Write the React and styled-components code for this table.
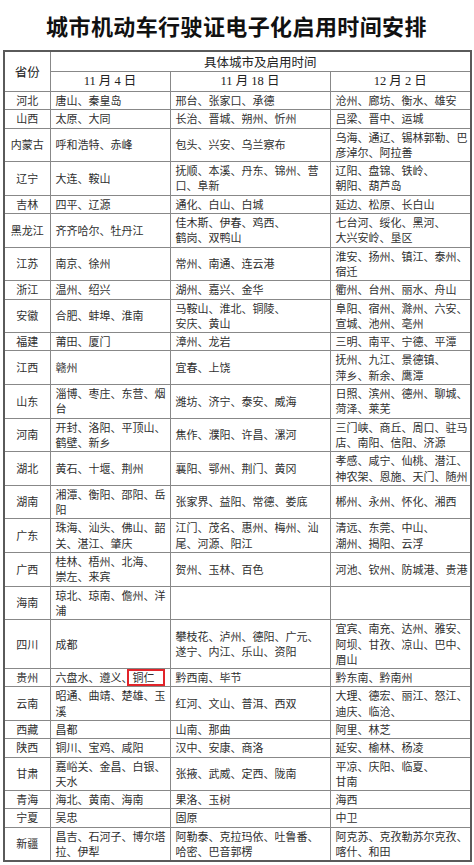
import styled, { createGlobalStyle } from "styled-components";

const GlobalStyle = createGlobalStyle`
  body {
    margin: 0;
    background: #fff;
    font-family: "Noto Sans CJK SC", "Noto Sans", sans-serif;
  }
`;

const Page = styled.div`
  width: 474px;
  box-sizing: border-box;
  padding: 0 4px 0 3px;
`;

const Title = styled.h1`
  margin: 0;
  height: 50px;
  line-height: 50px;
  text-align: center;
  font-size: 22px;
  font-weight: 700;
  letter-spacing: 0.4px;
  color: #111;
`;

const Table = styled.table`
  width: 467px;
  table-layout: fixed;
  border-collapse: collapse;
  border: 2px solid #5a5a5a;
  font-size: 11px;
  color: #2f2f2f;
`;

const HeadCell = styled.th`
  border: 1px solid #888;
  padding: 1px 0;
  font-weight: 400;
  font-size: 12.5px;
  line-height: 17px;
  text-align: center;
  color: #222;
  font-family: ${(p) =>
    p.$date
      ? `"Liberation Serif", "Noto Sans CJK SC", serif`
      : `"Noto Sans CJK SC", sans-serif`};
`;

const Cell = styled.td`
  border: 1px solid #888;
  padding: ${(p) => (p.$province ? "1px 0" : "1px 5px")};
  line-height: 15.3px;
  white-space: pre;
  vertical-align: middle;
  text-align: ${(p) => (p.$province ? "center" : "left")};
`;

/* red annotation frame drawn over a city name */
const Marked = styled.span`
  position: relative;
  display: inline-block;

  &::after {
    content: "";
    position: absolute;
    top: -1px;
    bottom: -1px;
    left: -6px;
    right: -10px;
    border: 2px solid #e1242a;
  }
`;

const rows = [
  ["河北", "唐山、秦皇岛", "邢台、张家口、承德", "沧州、廊坊、衡水、雄安"],
  ["山西", "太原、大同", "长治、晋城、朔州、忻州", "吕梁、晋中、运城"],
  ["内蒙古", "呼和浩特、赤峰", "包头、兴安、乌兰察布", "乌海、通辽、锡林郭勒、巴\n彦淖尔、阿拉善"],
  ["辽宁", "大连、鞍山", "抚顺、本溪、丹东、锦州、营\n口、阜新", "辽阳、盘锦、铁岭、\n朝阳、葫芦岛"],
  ["吉林", "四平、辽源", "通化、白山、白城", "延边、松原、长白山"],
  ["黑龙江", "齐齐哈尔、牡丹江", "佳木斯、伊春、鸡西、\n鹤岗、双鸭山", "七台河、绥化、黑河、\n大兴安岭、垦区"],
  ["江苏", "南京、徐州", "常州、南通、连云港", "淮安、扬州、镇江、泰州、\n宿迁"],
  ["浙江", "温州、绍兴", "湖州、嘉兴、金华", "衢州、台州、丽水、舟山"],
  ["安徽", "合肥、蚌埠、淮南", "马鞍山、淮北、铜陵、\n安庆、黄山", "阜阳、宿州、滁州、六安、\n宣城、池州、亳州"],
  ["福建", "莆田、厦门", "漳州、龙岩", "三明、南平、宁德、平潭"],
  ["江西", "赣州", "宜春、上饶", "抚州、九江、景德镇、\n萍乡、新余、鹰潭"],
  ["山东", "淄博、枣庄、东营、烟\n台", "潍坊、济宁、泰安、威海", "日照、滨州、德州、聊城、\n菏泽、莱芜"],
  ["河南", "开封、洛阳、平顶山、\n鹤壁、新乡", "焦作、濮阳、许昌、漯河", "三门峡、商丘、周口、驻马\n店、南阳、信阳、济源"],
  ["湖北", "黄石、十堰、荆州", "襄阳、鄂州、荆门、黄冈", "孝感、咸宁、仙桃、潜江、\n神农架、恩施、天门、随州"],
  ["湖南", "湘潭、衡阳、邵阳、岳\n阳", "张家界、益阳、常德、娄底", "郴州、永州、怀化、湘西"],
  ["广东", "珠海、汕头、佛山、韶\n关、湛江、肇庆", "江门、茂名、惠州、梅州、汕\n尾、河源、阳江", "清远、东莞、中山、\n潮州、揭阳、云浮"],
  ["广西", "桂林、梧州、北海、\n崇左、来宾", "贺州、玉林、百色", "河池、钦州、防城港、贵港"],
  ["海南", "琼北、琼南、儋州、洋\n浦", "", ""],
  ["四川", "成都", "攀枝花、泸州、德阳、广元、\n遂宁、内江、乐山、资阳", "宜宾、南充、达州、雅安、\n阿坝、甘孜、凉山、巴中、\n眉山"],
  ["贵州", <>六盘水、遵义、<Marked>铜仁</Marked></>, "黔西南、毕节", "黔东南、黔南州"],
  ["云南", "昭通、曲靖、楚雄、玉\n溪", "红河、文山、普洱、西双", "大理、德宏、丽江、怒江、\n迪庆、临沧、"],
  ["西藏", "昌都", "山南、那曲", "阿里、林芝"],
  ["陕西", "铜川、宝鸡、咸阳", "汉中、安康、商洛", "延安、榆林、杨凌"],
  ["甘肃", "嘉峪关、金昌、白银、\n天水", "张掖、武威、定西、陇南", "平凉、庆阳、临夏、\n甘南"],
  ["青海", "海北、黄南、海南", "果洛、玉树", "海西"],
  ["宁夏", "吴忠", "固原", "中卫"],
  ["新疆", "昌吉、石河子、博尔塔\n拉、伊犁", "阿勒泰、克拉玛依、吐鲁番、\n哈密、巴音郭楞", "阿克苏、克孜勒苏尔克孜、\n喀什、和田"],
];

const App = () => {
  return (
    <>
      <GlobalStyle />
      <Page>
        <Title>城市机动车行驶证电子化启用时间安排</Title>
        <Table>
          <colgroup>
            <col style={{ width: 46 }} />
            <col style={{ width: 120 }} />
            <col style={{ width: 160 }} />
            <col style={{ width: 141 }} />
          </colgroup>
          <thead>
            <tr>
              <HeadCell rowSpan={2}>省份</HeadCell>
              <HeadCell colSpan={3}>具体城市及启用时间</HeadCell>
            </tr>
            <tr>
              <HeadCell $date>11 月 4 日</HeadCell>
              <HeadCell $date>11 月 18 日</HeadCell>
              <HeadCell $date>12 月 2 日</HeadCell>
            </tr>
          </thead>
          <tbody>
            {rows.map(([province, first, second, third]) => (
              <tr key={province}>
                <Cell $province>{province}</Cell>
                <Cell>{first}</Cell>
                <Cell>{second}</Cell>
                <Cell>{third}</Cell>
              </tr>
            ))}
          </tbody>
        </Table>
      </Page>
    </>
  );
};

export default App;
